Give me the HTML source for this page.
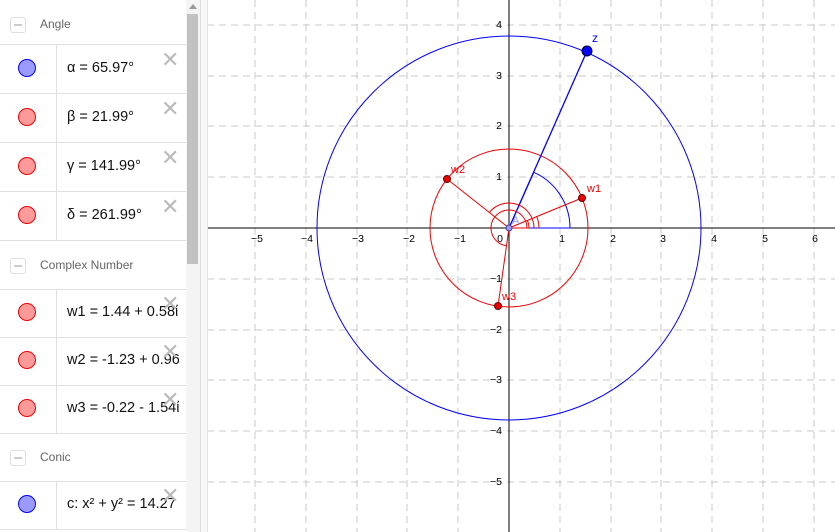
<!DOCTYPE html>
<html><head><meta charset="utf-8"><style>
body{margin:0;width:835px;height:532px;overflow:hidden;background:#fff;font-family:"Liberation Sans",sans-serif;position:relative}
#panel{position:absolute;left:0;top:0;width:186px;height:532px;background:#fff}
.hdr{position:absolute;left:0;width:186px;height:48px;border-bottom:1px solid #e0e0e0;}
.hdr .m{position:absolute;left:10px;top:17px;width:14px;height:14px;border:1px solid #ddd;border-radius:3px}
.hdr .m:after{content:"";position:absolute;left:3px;top:6px;width:8px;height:2px;background:#ccc}
.hdr span{position:absolute;left:40px;top:17px;font-size:12px;color:#666}
.row{position:absolute;left:0;width:186px;height:48px;border-bottom:1px solid #e0e0e0}
.row .c{position:absolute;left:18px;top:14px;width:18px;height:18px;border-radius:50%;box-sizing:border-box}
.red{background:#ff9a9a;border:1px solid #e00}
.blue{background:#9a9aff;border:1px solid #00f}
.row .sep{position:absolute;left:56px;top:0;width:1px;height:48px;background:#e0e0e0}
.row .t{position:absolute;left:67px;top:15px;font-family:"Liberation Sans",sans-serif;font-size:14.5px;color:#111;white-space:nowrap;width:112px;overflow:hidden}
.row .x{position:absolute;left:161px;top:4px;font-size:22px;color:#bbb;line-height:22px}
#sb{position:absolute;left:186px;top:0;width:14px;height:532px;background:#f4f4f4}
#thumb{position:absolute;left:187px;top:14px;width:11px;height:250px;background:#c1c1c1}
#div{position:absolute;left:200px;top:0;width:8px;height:532px;background:#f7f7f7;border-left:1px solid #ddd;border-right:1px solid #e4e4e4;box-sizing:border-box}
svg{position:absolute;left:0;top:0}
</style></head><body>
<svg width="835" height="532">
<g stroke="#c8c8c8" stroke-dasharray="7,5" stroke-width="1">
<line x1="255" y1="0" x2="255" y2="532"/><line x1="306" y1="0" x2="306" y2="532"/><line x1="357" y1="0" x2="357" y2="532"/><line x1="407" y1="0" x2="407" y2="532"/><line x1="458" y1="0" x2="458" y2="532"/><line x1="560" y1="0" x2="560" y2="532"/><line x1="611" y1="0" x2="611" y2="532"/><line x1="661" y1="0" x2="661" y2="532"/><line x1="712" y1="0" x2="712" y2="532"/><line x1="763" y1="0" x2="763" y2="532"/><line x1="814" y1="0" x2="814" y2="532"/>
<line x1="207" y1="25" x2="835" y2="25"/><line x1="207" y1="76" x2="835" y2="76"/><line x1="207" y1="126" x2="835" y2="126"/><line x1="207" y1="177" x2="835" y2="177"/><line x1="207" y1="279" x2="835" y2="279"/><line x1="207" y1="330" x2="835" y2="330"/><line x1="207" y1="380" x2="835" y2="380"/><line x1="207" y1="431" x2="835" y2="431"/><line x1="207" y1="482" x2="835" y2="482"/>
</g>
<line x1="207" y1="228" x2="835" y2="228" stroke="#000"/>
<line x1="509" y1="0" x2="509" y2="532" stroke="#000"/>
<g font-size="10.5" fill="#000" font-family="Liberation Sans,sans-serif" text-anchor="middle">
<text x="257" y="242">−5</text><text x="307" y="242">−4</text><text x="358" y="242">−3</text><text x="409" y="242">−2</text><text x="460" y="242">−1</text><text x="500" y="242">0</text><text x="562" y="242">1</text><text x="613" y="242">2</text><text x="663" y="242">3</text><text x="714" y="242">4</text><text x="765" y="242">5</text><text x="815" y="242">6</text>
</g>
<g font-size="10.5" fill="#000" font-family="Liberation Sans,sans-serif" text-anchor="end">
<text x="502" y="28">4</text><text x="502" y="79">3</text><text x="502" y="129">2</text><text x="502" y="180">1</text><text x="502" y="282">−1</text><text x="502" y="333">−2</text><text x="502" y="383">−3</text><text x="502" y="434">−4</text><text x="502" y="485">−5</text>
</g>
<circle cx="509" cy="228" r="192" fill="none" stroke="#00f"/>
<circle cx="509" cy="228" r="79" fill="none" stroke="#e00"/>
<path d="M509 228 L570 228 A61 61 0 0 0 533.8 172.3 Z" fill="none" stroke="#00f"/>
<line x1="509" y1="228" x2="587" y2="51" stroke="#00f" stroke-width="1.3"/>
<path d="M529 228 A20 20 0 0 0 527.5 220.5" fill="none" stroke="#e00"/>
<path d="M539 228 A30 30 0 0 0 536.8 216.8" fill="none" stroke="#e00"/>
<path d="M534 228 A25 25 0 0 0 489.3 212.6" fill="none" stroke="#e00"/>
<path d="M527 228 A18 18 0 1 0 506.5 245.8" fill="none" stroke="#e00"/>
<path d="M509 228 L529 228" stroke="#e00"/>
<line x1="509" y1="228" x2="582" y2="198" stroke="#e00"/>
<line x1="509" y1="228" x2="447" y2="179" stroke="#e00"/>
<line x1="509" y1="228" x2="498" y2="306" stroke="#e00"/>
<circle cx="582" cy="198" r="3.5" fill="#e00" stroke="#600"/>
<circle cx="447" cy="179" r="3.5" fill="#e00" stroke="#600"/>
<circle cx="498" cy="306" r="3.5" fill="#e00" stroke="#600"/>
<circle cx="509" cy="228" r="3" fill="#99f" stroke="#448"/>
<text x="512" y="224" font-size="11" fill="#99f" font-family="Liberation Sans,sans-serif">A</text>
<circle cx="587" cy="51" r="5" fill="#00f" stroke="#003"/>
<g font-size="11" fill="#e00" font-family="Liberation Sans,sans-serif">
<text x="587" y="192">w1</text><text x="451" y="173">w2</text><text x="502" y="300">w3</text></g>
<text x="592" y="42" font-size="12" fill="#00f" font-family="Liberation Sans,sans-serif">z</text>
</svg>
<div id="panel">
<div class="hdr" style="top:0;height:44px"><div class="m"></div><span>Angle</span></div>
<div class="row" style="top:45px"><div class="c blue"></div><div class="sep"></div><div class="t">α = 65.97°</div><div class="x">✕</div></div>
<div class="row" style="top:94px"><div class="c red"></div><div class="sep"></div><div class="t">β = 21.99°</div><div class="x">✕</div></div>
<div class="row" style="top:143px"><div class="c red"></div><div class="sep"></div><div class="t">γ = 141.99°</div><div class="x">✕</div></div>
<div class="row" style="top:192px"><div class="c red"></div><div class="sep"></div><div class="t">δ = 261.99°</div><div class="x">✕</div></div>
<div class="hdr" style="top:241px"><div class="m"></div><span>Complex Number</span></div>
<div class="row" style="top:289px"><div class="c red"></div><div class="sep"></div><div class="t">w1 = 1.44 + 0.58ί</div><div class="x">✕</div></div>
<div class="row" style="top:337px"><div class="c red"></div><div class="sep"></div><div class="t">w2 = -1.23 + 0.96ί</div><div class="x">✕</div></div>
<div class="row" style="top:385px"><div class="c red"></div><div class="sep"></div><div class="t">w3 = -0.22 - 1.54ί</div><div class="x">✕</div></div>
<div class="hdr" style="top:433px"><div class="m"></div><span>Conic</span></div>
<div class="row" style="top:481px"><div class="c blue"></div><div class="sep"></div><div class="t">c: x² + y² = 14.27</div><div class="x">✕</div></div>
</div>
<div id="sb"></div><div id="thumb"></div>
<div style="position:absolute;left:189px;top:4px;width:0;height:0;border-left:4px solid transparent;border-right:4px solid transparent;border-bottom:5px solid #999"></div>
<div id="div"></div>
</body></html>
